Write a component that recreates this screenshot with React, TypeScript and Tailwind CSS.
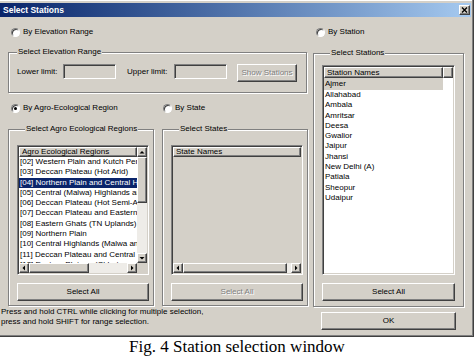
import React from "react";

const sunken =
  "border border-t-[#808080] border-l-[#808080] border-b-white border-r-white shadow-[inset_1px_1px_0_#404040,inset_-1px_-1px_0_#d4d0c8]";
const raised =
  "border border-t-white border-l-white border-b-[#404040] border-r-[#404040] shadow-[inset_-1px_-1px_0_#808080]";
const disabledText = "text-[#808080] [text-shadow:1px_1px_0_#fff]";

const regions = [
  "[02] Western Plain and Kutch Peninsula",
  "[03] Deccan Plateau (Hot Arid)",
  "[04] Northern Plain and Central Highlands",
  "[05] Central (Malwa) Highlands and Gujarat Plains",
  "[06] Deccan Plateau (Hot Semi-Arid)",
  "[07] Deccan Plateau and Eastern Ghats",
  "[08] Eastern Ghats (TN Uplands)",
  "[09] Northern Plain",
  "[10] Central Highlands (Malwa and Bundelkhand)",
  "[11] Deccan Plateau and Central Highlands",
  "[12] Eastern Plateau (Chhotanagpur)",
];

const stations = [
  "Allahabad",
  "Ambala",
  "Amritsar",
  "Deesa",
  "Gwalior",
  "Jaipur",
  "Jhansi",
  "New Delhi (A)",
  "Patiala",
  "Sheopur",
  "Udaipur",
];

function Radio({ label, checked }: { label: string; checked?: boolean }) {
  return (
    <div className="flex h-[10px] items-center gap-[3px]">
      <span className="flex h-[9px] w-[9px] items-center justify-center rounded-full border border-t-[#808080] border-l-[#808080] border-b-white border-r-white bg-white shadow-[inset_1px_1px_0_#404040]">
        {checked && <span className="h-[3px] w-[3px] rounded-full bg-black" />}
      </span>
      <span className="leading-[10px]">{label}</span>
    </div>
  );
}

function Group({
  title,
  className,
  children,
}: {
  title: string;
  className: string;
  children?: React.ReactNode;
}) {
  return (
    <div
      className={`flex flex-col border border-[#808080] shadow-[inset_1px_1px_0_#fff,1px_1px_0_#fff] ${className}`}
    >
      <span className="-mt-[6px] ml-[8px] w-fit bg-[#d4d0c8] px-[1px] leading-[10px]">
        {title}
      </span>
      {children}
    </div>
  );
}

function Arrow({ dir }: { dir: "up" | "down" | "left" | "right" }) {
  const pts = {
    up: "1.5,5.5 4,3 6.5,5.5",
    down: "1.5,3 4,5.5 6.5,3",
    left: "5,1.5 2.5,4 5,6.5",
    right: "3,1.5 5.5,4 3,6.5",
  }[dir];
  return (
    <div
      className={`flex h-[10px] w-[10px] shrink-0 items-center justify-center bg-[#d4d0c8] ${raised}`}
    >
      <svg width="8" height="8" viewBox="0 0 8 8">
        <polygon points={pts} fill="#000" />
      </svg>
    </div>
  );
}

function Button({ label, disabled }: { label: string; disabled?: boolean }) {
  return (
    <div
      className={`flex h-[18px] w-full items-center justify-center bg-[#d4d0c8] ${raised} ${
        disabled ? disabledText : ""
      }`}
    >
      {label}
    </div>
  );
}

function Header({ label, className }: { label: string; className: string }) {
  return (
    <div
      className={`shrink-0 whitespace-nowrap bg-[#d4d0c8] pl-[2px] ${raised} ${className}`}
    >
      {label}
    </div>
  );
}

export default function App() {
  return (
    <div className="h-[358px] w-[474px] overflow-hidden bg-white font-['Liberation_Sans',Arial,sans-serif] text-[8px] text-black">
      <div className="flex h-[337px] flex-col bg-[#d4d0c8] pr-[3px] pt-[3px] shadow-[inset_-1px_-1px_0_#404040,inset_-2px_-2px_0_#808080,inset_0_1px_0_#fff]">
        <div className="flex h-[14px] shrink-0 items-center justify-between bg-linear-to-r from-[#0a246a] to-[#a6caf0] pl-[3px] pr-[1px]">
          <span className="text-[8.5px] font-bold leading-[14px] text-white">
            Select Stations
          </span>
          <div
            className={`flex h-[10px] w-[11px] items-center justify-center bg-[#d4d0c8] ${raised}`}
          >
            <svg width="7" height="6" viewBox="0 0 7 6">
              <path d="M1 0.5 L6 5.5 M6 0.5 L1 5.5" stroke="#000" strokeWidth="1.4" />
            </svg>
          </div>
        </div>

        <div className="flex pl-[8px]">
          <div className="flex w-[300px] flex-col">
            <div className="mt-[10px] pl-[3px]">
              <Radio label="By Elevation Range" />
            </div>
            <Group title="Select Elevation Range" className="mt-[15px] h-[41px] w-[299px]">
              <div className="mt-[7px] flex items-start pl-[8px]">
                <span className="w-[46px] leading-[15px]">Lower limit:</span>
                <div className={`h-[15px] w-[53px] bg-[#d4d0c8] ${sunken}`} />
                <span className="ml-[11px] w-[47px] leading-[15px]">Upper limit:</span>
                <div className={`h-[15px] w-[53px] bg-[#d4d0c8] ${sunken}`} />
                <div className="ml-[10px] w-[60px]">
                  <Button label="Show Stations" disabled />
                </div>
              </div>
            </Group>
            <div className="mt-[10px] flex pl-[3px]">
              <div className="w-[152px]">
                <Radio label="By Agro-Ecological Region" checked />
              </div>
              <Radio label="By State" />
            </div>
            <div className="mt-[16px] flex gap-[8px]">
              <Group title="Select Agro Ecological Regions" className="h-[177px] w-[146px] pl-[8px] pr-[4px]">
                <div className={`mt-[11px] flex h-[130px] flex-col bg-white p-[1px] ${sunken}`}>
                  <div className="flex min-h-0 flex-1">
                    <div className="flex min-w-0 flex-1 flex-col overflow-hidden">
                      <Header label="Agro Ecological Regions" className="h-[10px] leading-[8px]" />
                      {regions.map((r, i) => (
                        <div
                          key={r}
                          className={`h-[10.3px] shrink-0 whitespace-nowrap pl-[1px] leading-[10.3px] ${
                            i === 2 ? "bg-[#0a246a] text-white" : ""
                          }`}
                        >
                          {r}
                        </div>
                      ))}
                    </div>
                    <div className="flex w-[10px] flex-col">
                      <Arrow dir="up" />
                      <div className={`h-[46px] shrink-0 bg-[#d4d0c8] ${raised}`} />
                      <div className="flex-1 bg-[#eeece8]" />
                      <Arrow dir="down" />
                    </div>
                  </div>
                  <div className="flex h-[10px] shrink-0">
                    <Arrow dir="left" />
                    <div className={`w-[60px] bg-[#d4d0c8] ${raised}`} />
                    <div className="flex-1 bg-[#eeece8]" />
                    <Arrow dir="right" />
                    <div className="w-[10px] bg-[#d4d0c8]" />
                  </div>
                </div>
                <div className="mt-[8px]">
                  <Button label="Select All" />
                </div>
              </Group>
              <Group title="Select States" className="h-[177px] w-[146px] pl-[8px] pr-[4px]">
                <div className={`mt-[11px] flex h-[130px] flex-col bg-[#d4d0c8] p-[1px] ${sunken}`}>
                  <Header label="State Names" className="h-[10px] leading-[8px]" />
                  <div className="flex-1" />
                  <div className="flex h-[10px] shrink-0">
                    <Arrow dir="left" />
                    <div className={`flex-1 bg-[#d4d0c8] ${raised}`} />
                    <div className="w-[4px] bg-[#eeece8]" />
                    <Arrow dir="right" />
                  </div>
                </div>
                <div className="mt-[8px]">
                  <Button label="Select All" disabled />
                </div>
              </Group>
            </div>
          </div>

          <div className="ml-[5px] flex w-[151px] flex-col">
            <div className="mt-[10px] pl-[3px]">
              <Radio label="By Station" />
            </div>
            <Group title="Select Stations" className="mt-[16px] h-[254px] px-[8px]">
              <div className={`mt-[7px] flex h-[210px] flex-col bg-white p-[1px] ${sunken}`}>
                <div className="flex">
                  <Header label="Station Names" className="h-[11px] flex-1 leading-[9px]" />
                  <Header label="" className="h-[11px] w-[10px]" />
                </div>
                <div className="mr-[10px] h-[12px] bg-[#d4d0c8] pl-[1px] leading-[12px]">Ajmer</div>
                {stations.map((s) => (
                  <div key={s} className="h-[10.3px] pl-[1px] leading-[10.3px]">
                    {s}
                  </div>
                ))}
              </div>
              <div className="mt-[8px]">
                <Button label="Select All" />
              </div>
            </Group>
          </div>
        </div>

        <div className="flex justify-between">
          <div className="pl-[1px] leading-[10px]">
            <div>Press and hold CTRL while clicking for multiple selection,</div>
            <div>press and hold SHIFT for range selection.</div>
          </div>
          <div className="mr-[15px] mt-[5px] w-[135px]">
            <Button label="OK" />
          </div>
        </div>
      </div>
      <div className="h-[21px] text-center font-['Liberation_Serif','Times_New_Roman',serif] text-[17px] leading-[19px]">
        Fig. 4 Station selection window
      </div>
    </div>
  );
}
